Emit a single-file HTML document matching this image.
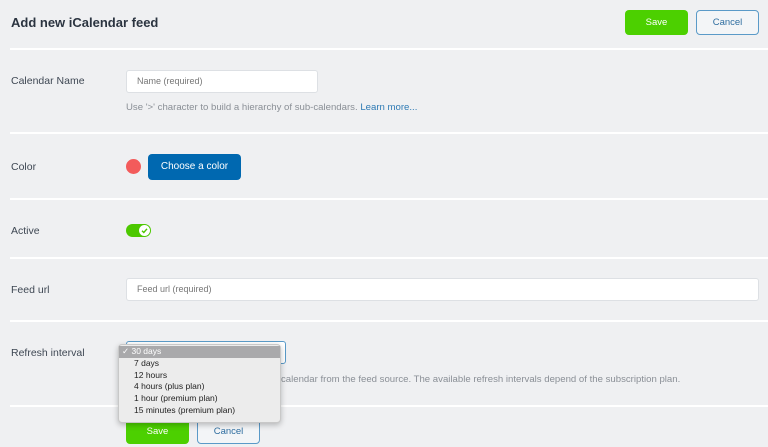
<!DOCTYPE html><html><head><style>
body{margin:0;width:768px;height:447px;background:#eff0f2;font-family:"Liberation Sans",sans-serif;position:relative;overflow:hidden;color:#3a4450}
.a{position:absolute}
.hr{position:absolute;left:10px;right:0;height:2px;background:#fff}
.lbl{position:absolute;left:11px;font-size:10.5px;color:#3e4753}
.inp{position:absolute;background:#fff;border:1px solid #dde0e4;border-radius:3px;font-size:9px;color:#777;box-sizing:border-box;padding-left:10px;line-height:21px}
.btn{position:absolute;border-radius:4px;font-size:9.5px;text-align:center;box-sizing:border-box}
.g{background:#4cd000;color:#fff}
.c{border:1px solid #5a9ac8;color:#2f6ea0;background:#f3f5f7}
.help{position:absolute;font-size:9.6px;color:#8a8f96}
.dd{position:absolute;left:118px;top:344px;width:161px;height:77px;background:#ececec;border:1px solid #c8c8c8;border-radius:4px;box-shadow:0 2px 6px rgba(0,0,0,.25);font-size:8.5px;color:#222}
.dd div{height:11.8px;line-height:11.8px;padding-left:15px}
</style></head><body>
<div class="a" style="left:11px;top:15px;font-size:13px;font-weight:bold;color:#2b3440">Add new iCalendar feed</div>
<div class="btn g" style="left:625px;top:10px;width:63px;height:25px;line-height:25px">Save</div>
<div class="btn c" style="left:696px;top:10px;width:63px;height:25px;line-height:23px">Cancel</div>
<div class="hr" style="top:48px"></div>
<div class="lbl" style="top:75px">Calendar Name</div>
<div class="inp" style="left:126px;top:70px;width:192px;height:23px">Name (required)</div>
<div class="help" style="left:126px;top:102px">Use '&gt;' character to build a hierarchy of sub-calendars. <span style="color:#2f7bb5">Learn more...</span></div>
<div class="hr" style="top:132px"></div>
<div class="lbl" style="top:161px">Color</div>
<div class="a" style="left:126px;top:159px;width:15px;height:15px;border-radius:50%;background:#f35b5b"></div>
<div class="btn" style="left:148px;top:154px;width:93px;height:26px;line-height:26px;background:#0068b0;color:#fff;font-size:10px">Choose a color</div>
<div class="hr" style="top:198px"></div>
<div class="lbl" style="top:225px">Active</div>
<div class="a" style="left:126px;top:224px;width:25px;height:13px;border-radius:7px;background:#4cc800"></div>
<div class="a" style="left:139px;top:225px;width:11px;height:11px;border-radius:50%;background:#fff"><svg width="11" height="11" style="position:absolute;left:0;top:0"><path d="M3 5.8L4.8 7.5L8 3.8" stroke="#4cc800" stroke-width="1.4" fill="none"/></svg></div>
<div class="hr" style="top:257px"></div>
<div class="lbl" style="top:284px">Feed url</div>
<div class="inp" style="left:126px;top:278px;width:633px;height:23px">Feed url (required)</div>
<div class="hr" style="top:320px"></div>
<div class="lbl" style="top:347px">Refresh interval</div>
<div class="a" style="left:126px;top:341px;width:160px;height:23px;background:#fff;border:1px solid #5a9ac8;border-radius:3px;box-sizing:border-box"></div>
<div class="help" style="left:281px;top:374px">calendar from the feed source. The available refresh intervals depend of the subscription plan.</div>
<div class="hr" style="top:405px"></div>
<div class="btn g" style="left:126px;top:419px;width:63px;height:25px;line-height:25px">Save</div>
<div class="btn c" style="left:197px;top:419px;width:63px;height:25px;line-height:23px">Cancel</div>
<div class="dd"><div style="background:#a9a9ab;color:#fff;padding-left:3px;margin-top:1px">✓ 30 days</div><div>7 days</div><div>12 hours</div><div>4 hours (plus plan)</div><div>1 hour (premium plan)</div><div>15 minutes (premium plan)</div></div>
</body></html>
